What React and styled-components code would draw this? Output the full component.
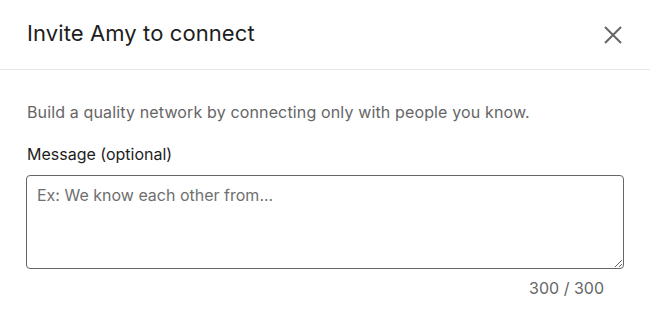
import React from 'react';
import styled, { createGlobalStyle } from 'styled-components';

const Global = createGlobalStyle`
  html, body { margin: 0; padding: 0; background: #fff; }
  body { font-family: Inter, Roboto, "Liberation Sans", sans-serif; -webkit-font-smoothing: antialiased; }
  * { box-sizing: border-box; }
`;

const Modal = styled.div`
  width: 650px;
  height: 309px;
  background: #fff;
  display: flex;
  flex-direction: column;
`;

const Header = styled.header`
  height: 70px;
  padding: 0 25px 0 27px;
  display: flex;
  align-items: center;
  justify-content: space-between;
  border-bottom: 1px solid #e8e8e8;
`;

const Title = styled.h2`
  margin: 0;
  font-size: 22px;
  font-weight: 400;
  letter-spacing: 0.1px;
  color: #1d1d1d;
  padding-bottom: 4px;
`;

const Close = styled.button`
  border: 0;
  background: none;
  padding: 0;
  width: 24px;
  height: 24px;
  display: flex;
  align-items: center;
  justify-content: center;
  color: #666;
  cursor: pointer;
`;

const Body = styled.div`
  padding: 31px 26px 0 27px;
  display: flex;
  flex-direction: column;
`;

const Lead = styled.p`
  margin: 0 0 20px;
  font-size: 16px;
  line-height: 22px;
  letter-spacing: 0.14px;
  color: #666;
`;

const Label = styled.label`
  font-size: 16px;
  line-height: 22px;
  color: #1d1d1d;
  margin-bottom: 10px;
`;

const Area = styled.textarea`
  width: 598px;
  height: 94px;
  margin-left: -1px;
  border: 1px solid #666;
  border-radius: 4px;
  padding: 9px 10px;
  font: inherit;
  font-size: 16px;
  color: #1d1d1d;
  resize: vertical;
  outline: none;
  &::placeholder { color: #6f6f6f; }
`;

const Counter = styled.div`
  align-self: flex-end;
  margin: 9px 20px 0 0;
  font-size: 16px;
  color: #666;
`;

export default function App() {
  return (
    <Modal>
      <Global />
      <Header>
        <Title>Invite Amy to connect</Title>
        <Close aria-label="Dismiss">
          <svg width="20" height="20" viewBox="0 0 20 20">
            <path d="M2 2 L18 18 M18 2 L2 18" stroke="currentColor" strokeWidth="2" />
          </svg>
        </Close>
      </Header>
      <Body>
        <Lead>Build a quality network by connecting only with people you know.</Lead>
        <Label htmlFor="msg">Message (optional)</Label>
        <Area id="msg" placeholder="Ex: We know each other from..." />
        <Counter>300 / 300</Counter>
      </Body>
    </Modal>
  );
}
